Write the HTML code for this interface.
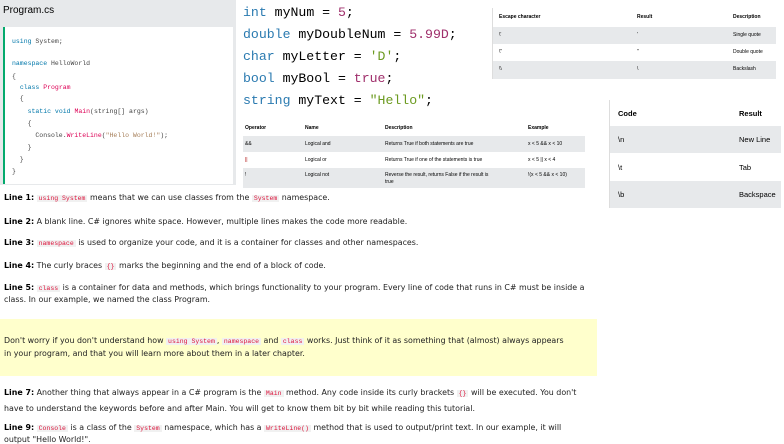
<!DOCTYPE html>
<html><head><meta charset="utf-8">
<style>
*{margin:0;padding:0;box-sizing:border-box}
body{width:784px;height:441px;overflow:hidden;background:#fff;font-family:"Liberation Sans",sans-serif;color:#000;position:relative}
.a{position:absolute;white-space:nowrap}
.m{font-family:"Liberation Mono",monospace}
.frame{left:0;top:0;width:236px;height:185px;background:#e7e9eb}
.hdr{left:3px;top:5px;font-size:10px;color:#000}
.code{left:3px;top:27px;width:230px;height:157px;background:#fff;border-left:2px solid #04aa6d}
.cl{left:12px;font-size:6.5px;color:#444}
.kw{color:#0077aa}.pk{color:#dd0055}.st{color:#a67f59}
.v{left:243px;font-size:13.2px;color:#000}
.vk{color:#2a7ab0}.vn{color:#a0306c}.vs{color:#6b9a1f}
.row{position:absolute;left:0;right:0}
.g{background:#e7e9eb}
.t{left:4px;font-family:"DejaVu Sans",sans-serif;font-size:7.9px;color:#222}
.t b{font-weight:bold;color:#000}
.c{font-family:"Liberation Mono",monospace;color:#dc143c;background:#f1f1f1;padding:0 2px;font-size:6.5px}
</style></head><body>
<div class="a frame"></div>
<div class="a hdr">Program.cs</div>
<div class="a code"></div>
<div class="a m cl" style="top:38px"><span class="kw">using</span> System;</div>
<div class="a m cl" style="top:60px"><span class="kw">namespace</span> HelloWorld</div>
<div class="a m cl" style="top:73px">{</div>
<div class="a m cl" style="top:84px">&nbsp;&nbsp;<span class="kw">class</span> <span class="pk">Program</span></div>
<div class="a m cl" style="top:95px">&nbsp;&nbsp;{</div>
<div class="a m cl" style="top:108px">&nbsp;&nbsp;&nbsp;&nbsp;<span class="kw">static void</span> <span class="pk">Main</span>(string[] args)</div>
<div class="a m cl" style="top:120px">&nbsp;&nbsp;&nbsp;&nbsp;{</div>
<div class="a m cl" style="top:132px">&nbsp;&nbsp;&nbsp;&nbsp;&nbsp;&nbsp;Console.<span class="pk">WriteLine</span>(<span class="st">"Hello World!"</span>);</div>
<div class="a m cl" style="top:144px">&nbsp;&nbsp;&nbsp;&nbsp;}</div>
<div class="a m cl" style="top:156px">&nbsp;&nbsp;}</div>
<div class="a m cl" style="top:168px">}</div>

<div class="a m v" style="top:5px"><span class="vk">int</span> myNum = <span class="vn">5</span>;</div>
<div class="a m v" style="top:27px"><span class="vk">double</span> myDoubleNum = <span class="vn">5.99D</span>;</div>
<div class="a m v" style="top:49px"><span class="vk">char</span> myLetter = <span class="vs">'D'</span>;</div>
<div class="a m v" style="top:71px"><span class="vk">bool</span> myBool = <span class="vn">true</span>;</div>
<div class="a m v" style="top:93px"><span class="vk">string</span> myText = <span class="vs">"Hello"</span>;</div>

<div class="a" style="left:492px;top:8px;width:284px;height:71px;border-left:1px solid #ddd">
<div class="row" style="top:0;height:19px"><span class="a" style="left:6px;top:6px;font-size:5px;font-weight:bold">Escape character</span><span class="a" style="left:144px;top:6px;font-size:5px;font-weight:bold">Result</span><span class="a" style="left:240px;top:6px;font-size:5px;font-weight:bold">Description</span></div>
<div class="row g" style="top:19px;height:17px"><span class="a" style="left:6px;top:5px;font-size:5px">\'</span><span class="a" style="left:144px;top:5px;font-size:5px">'</span><span class="a" style="left:240px;top:5px;font-size:5px">Single quote</span></div>
<div class="row" style="top:36px;height:17px"><span class="a" style="left:6px;top:5px;font-size:5px">\"</span><span class="a" style="left:144px;top:5px;font-size:5px">"</span><span class="a" style="left:240px;top:5px;font-size:5px">Double quote</span></div>
<div class="row g" style="top:53px;height:18px"><span class="a" style="left:6px;top:5px;font-size:5px">\\</span><span class="a" style="left:144px;top:5px;font-size:5px">\</span><span class="a" style="left:240px;top:5px;font-size:5px">Backslash</span></div>
</div>

<div class="a" style="left:243px;top:120px;width:342px;height:68px">
<div class="row" style="top:0;height:16px;font-weight:bold"><span class="a" style="left:2px;top:5px;font-size:5px">Operator</span><span class="a" style="left:62px;top:5px;font-size:5px">Name</span><span class="a" style="left:142px;top:5px;font-size:5px">Description</span><span class="a" style="left:285px;top:5px;font-size:5px">Example</span></div>
<div class="row g" style="top:16px;height:16px"><span class="a" style="left:2px;top:5px;font-size:5px">&amp;&amp;</span><span class="a" style="left:62px;top:5px;font-size:5px">Logical and</span><span class="a" style="left:142px;top:5px;font-size:5px">Returns True if both statements are true</span><span class="a" style="left:285px;top:5px;font-size:5px">x &lt; 5 &amp;&amp;  x &lt; 10</span></div>
<div class="row" style="top:32px;height:16px"><span class="a" style="left:2px;top:5px;font-size:5px;color:#a00">||</span><span class="a" style="left:62px;top:5px;font-size:5px">Logical or</span><span class="a" style="left:142px;top:5px;font-size:5px">Returns True if one of the statements is true</span><span class="a" style="left:285px;top:5px;font-size:5px">x &lt; 5 || x &lt; 4</span></div>
<div class="row g" style="top:48px;height:20px"><span class="a" style="left:2px;top:4px;font-size:5px">!</span><span class="a" style="left:62px;top:4px;font-size:5px">Logical not</span><span class="a" style="left:142px;top:4px;font-size:5px;line-height:7px">Reverse the result, returns False if the result is<br>true</span><span class="a" style="left:285px;top:4px;font-size:5px">!(x &lt; 5 &amp;&amp; x &lt; 10)</span></div>
</div>

<div class="a" style="left:609px;top:100px;width:172px;height:108px;border-left:1px solid #ddd">
<div class="row" style="top:0;height:26px"><span class="a" style="left:8px;top:9px;font-size:7.5px;font-weight:bold">Code</span><span class="a" style="left:129px;top:9px;font-size:7.5px;font-weight:bold">Result</span></div>
<div class="row g" style="top:26px;height:27px"><span class="a" style="left:8px;top:9px;font-size:7.5px">\n</span><span class="a" style="left:129px;top:9px;font-size:7.5px">New Line</span></div>
<div class="row" style="top:53px;height:28px"><span class="a" style="left:8px;top:10px;font-size:7.5px">\t</span><span class="a" style="left:129px;top:10px;font-size:7.5px">Tab</span></div>
<div class="row g" style="top:81px;height:27px"><span class="a" style="left:8px;top:9px;font-size:7.5px">\b</span><span class="a" style="left:129px;top:9px;font-size:7.5px">Backspace</span></div>
</div>

<div class="a t" style="top:193px"><b>Line 1:</b> <span class="c">using System</span> means that we can use classes from the <span class="c">System</span> namespace.</div>
<div class="a t" style="top:217px"><b>Line 2:</b> A blank line. C# ignores white space. However, multiple lines makes the code more readable.</div>
<div class="a t" style="top:238px"><b>Line 3:</b> <span class="c">namespace</span> is used to organize your code, and it is a container for classes and other namespaces.</div>
<div class="a t" style="top:261px"><b>Line 4:</b> The curly braces <span class="c">{}</span> marks the beginning and the end of a block of code.</div>
<div class="a t" style="top:283px"><b>Line 5:</b> <span class="c">class</span> is a container for data and methods, which brings functionality to your program. Every line of code that runs in C# must be inside a</div>
<div class="a t" style="top:295px">class. In our example, we named the class Program.</div>
<div class="a" style="left:0;top:319px;width:597px;height:57px;background:#ffffcc"></div>
<div class="a t" style="top:336px">Don't worry if you don't understand how <span class="c">using System</span>, <span class="c">namespace</span> and <span class="c">class</span> works. Just think of it as something that (almost) always appears</div>
<div class="a t" style="top:349px">in your program, and that you will learn more about them in a later chapter.</div>
<div class="a t" style="top:388px"><b>Line 7:</b> Another thing that always appear in a C# program is the <span class="c">Main</span> method. Any code inside its curly brackets <span class="c">{}</span> will be executed. You don't</div>
<div class="a t" style="top:404px">have to understand the keywords before and after Main. You will get to know them bit by bit while reading this tutorial.</div>
<div class="a t" style="top:423px"><b>Line 9:</b> <span class="c">Console</span> is a class of the <span class="c">System</span> namespace, which has a <span class="c">WriteLine()</span> method that is used to output/print text. In our example, it will</div>
<div class="a t" style="top:435px">output "Hello World!".</div>
</body></html>
